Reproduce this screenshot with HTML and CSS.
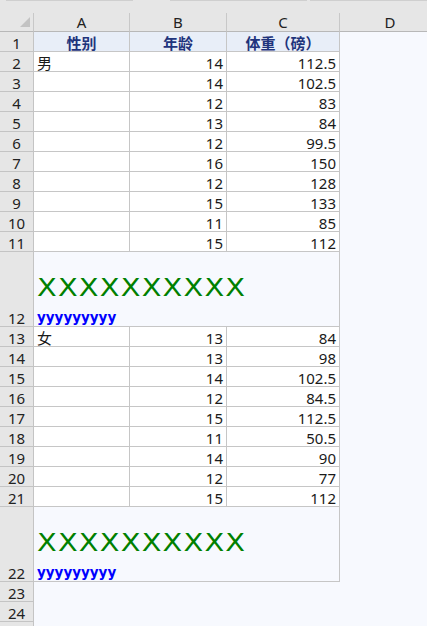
FILE: index.html
```html
<!DOCTYPE html>
<html lang="zh-CN">

<head>
    <meta charset="UTF-8">
    <meta name="viewport" content="width=device-width, initial-scale=1.0">
    <title>Sheet1</title>
    <link rel="stylesheet" href="styles.css">
</head>

<body>
    <div class="topbar">
        <span class="bar bar-one"></span>
        <span class="bar bar-two"></span>
        <span class="bar bar-three"></span>
    </div>

    <div class="sheet">
        <!-- column headers -->
        <div class="corner">
            <svg width="10" height="10" viewBox="0 0 10 10"><polygon points="10,0 10,10 0,10" fill="#c3c3c3" /></svg>
        </div>
        <div class="colhead">A</div>
        <div class="colhead">B</div>
        <div class="colhead">C</div>
        <div class="colhead colhead-last">D</div>

        <!-- row 1 -->
        <div class="rowhead">1</div>
        <div class="cell head">性别</div>
        <div class="cell head">年龄</div>
        <div class="cell head">体重（磅）</div>
        <div class="blank"></div>

        <div class="rowhead">2</div>
        <div class="cell txt">男</div>
        <div class="cell num">14</div>
        <div class="cell num">112.5</div>
        <div class="blank"></div>

        <div class="rowhead">3</div>
        <div class="cell txt"></div>
        <div class="cell num">14</div>
        <div class="cell num">102.5</div>
        <div class="blank"></div>

        <div class="rowhead">4</div>
        <div class="cell txt"></div>
        <div class="cell num">12</div>
        <div class="cell num">83</div>
        <div class="blank"></div>

        <div class="rowhead">5</div>
        <div class="cell txt"></div>
        <div class="cell num">13</div>
        <div class="cell num">84</div>
        <div class="blank"></div>

        <div class="rowhead">6</div>
        <div class="cell txt"></div>
        <div class="cell num">12</div>
        <div class="cell num">99.5</div>
        <div class="blank"></div>

        <div class="rowhead">7</div>
        <div class="cell txt"></div>
        <div class="cell num">16</div>
        <div class="cell num">150</div>
        <div class="blank"></div>

        <div class="rowhead">8</div>
        <div class="cell txt"></div>
        <div class="cell num">12</div>
        <div class="cell num">128</div>
        <div class="blank"></div>

        <div class="rowhead">9</div>
        <div class="cell txt"></div>
        <div class="cell num">15</div>
        <div class="cell num">133</div>
        <div class="blank"></div>

        <div class="rowhead">10</div>
        <div class="cell txt"></div>
        <div class="cell num">11</div>
        <div class="cell num">85</div>
        <div class="blank"></div>

        <div class="rowhead">11</div>
        <div class="cell txt"></div>
        <div class="cell num">15</div>
        <div class="cell num">112</div>
        <div class="blank"></div>

        <!-- row 12, merged A:C -->
        <div class="rowhead">12</div>
        <div class="cell merged">
            <div class="big"><span>XXXXXXXXXX</span></div>
            <div class="small">yyyyyyyyy</div>
        </div>
        <div class="blank"></div>

        <div class="rowhead">13</div>
        <div class="cell txt">女</div>
        <div class="cell num">13</div>
        <div class="cell num">84</div>
        <div class="blank"></div>

        <div class="rowhead">14</div>
        <div class="cell txt"></div>
        <div class="cell num">13</div>
        <div class="cell num">98</div>
        <div class="blank"></div>

        <div class="rowhead">15</div>
        <div class="cell txt"></div>
        <div class="cell num">14</div>
        <div class="cell num">102.5</div>
        <div class="blank"></div>

        <div class="rowhead">16</div>
        <div class="cell txt"></div>
        <div class="cell num">12</div>
        <div class="cell num">84.5</div>
        <div class="blank"></div>

        <div class="rowhead">17</div>
        <div class="cell txt"></div>
        <div class="cell num">15</div>
        <div class="cell num">112.5</div>
        <div class="blank"></div>

        <div class="rowhead">18</div>
        <div class="cell txt"></div>
        <div class="cell num">11</div>
        <div class="cell num">50.5</div>
        <div class="blank"></div>

        <div class="rowhead">19</div>
        <div class="cell txt"></div>
        <div class="cell num">14</div>
        <div class="cell num">90</div>
        <div class="blank"></div>

        <div class="rowhead">20</div>
        <div class="cell txt"></div>
        <div class="cell num">12</div>
        <div class="cell num">77</div>
        <div class="blank"></div>

        <div class="rowhead">21</div>
        <div class="cell txt"></div>
        <div class="cell num">15</div>
        <div class="cell num">112</div>
        <div class="blank"></div>

        <!-- row 22, merged A:C -->
        <div class="rowhead">22</div>
        <div class="cell merged">
            <div class="big"><span>XXXXXXXXXX</span></div>
            <div class="small">yyyyyyyyy</div>
        </div>
        <div class="blank"></div>

        <div class="rowhead">23</div>
        <div class="blank wide"></div>

        <div class="rowhead">24</div>
        <div class="blank wide"></div>

        <div class="rowhead"></div>
        <div class="blank wide"></div>
    </div>
</body>

</html>
```

FILE: styles.css
```css
* {
    box-sizing: border-box;
}

body {
    margin: 0;
    background-color: #f7f9fe;
    font-family: "Noto Sans", "Noto Sans CJK SC", sans-serif;
    font-size: 15px;
    color: #1a1a1a;
    overflow: hidden;
}

.topbar {
    height: 13px;
    background-color: #e6e6e6;
    position: relative;
}

.bar {
    display: block;
    height: 1px;
    background-color: #cfcfcf;
    position: absolute;
    top: 0;
}

.bar-one {
    left: 6px;
    width: 127px;
}

.bar-two {
    left: 170px;
    width: 137px;
}

.bar-three {
    left: 310px;
    right: 0;
}

.sheet {
    display: grid;
    grid-template-columns: 34px 96px 97px 113px 100px;
    grid-template-rows: 19px repeat(11, 20px) 75px repeat(9, 20px) 75px repeat(3, 20px);
}

/* headers */
.corner {
    background-color: #e6e6e6;
    border-right: 1px solid #c8c8c8;
    border-bottom: 1px solid #b8b8b8;
    display: flex;
    justify-content: flex-end;
    align-items: flex-end;
    padding-right: 3px;
    padding-bottom: 4px;
}

.corner svg {
    display: block;
}

.colhead {
    background-color: #e6e6e6;
    border-right: 1px solid #c8c8c8;
    border-bottom: 1px solid #b8b8b8;
    display: flex;
    justify-content: center;
    align-items: flex-end;
    line-height: 15px;
    padding-bottom: 1px;
    color: #222;
}

.colhead-last {
    border-right: none;
}

.rowhead {
    background-color: #e6e6e6;
    border-right: 1px solid #c4c4c4;
    border-bottom: 1px solid #c4c4c4;
    display: flex;
    justify-content: center;
    align-items: flex-end;
    line-height: 15px;
    color: #222;
}

/* cells */
.cell {
    background-color: #fff;
    border-right: 1px solid #c6c6c6;
    border-bottom: 1px solid #c6c6c6;
    display: flex;
    align-items: flex-end;
    line-height: 15px;
    white-space: nowrap;
}

.txt {
    padding-left: 3px;
}

.num {
    justify-content: flex-end;
    padding-right: 3px;
}

.head {
    background-color: #e8eef8;
    justify-content: center;
    font-weight: bold;
    color: #1f347c;
}

.blank {
    background-color: #f7f9fe;
}

.wide {
    grid-column: span 4;
}

/* merged rows */
.merged {
    grid-column: span 3;
    background-color: #f7f9fe;
    flex-direction: column;
    justify-content: flex-end;
    align-items: flex-start;
    padding-left: 3px;
    overflow: hidden;
}

.big {
    font-family: "DejaVu Sans", sans-serif;
    font-size: 24px;
    line-height: 24px;
    color: #008000;
    margin-bottom: 11px;
}

.big span {
    display: inline-block;
    letter-spacing: 1px;
    transform: scaleX(1.2);
    transform-origin: left bottom;
}

.small {
    font-family: "DejaVu Sans", sans-serif;
    font-size: 13.5px;
    font-weight: bold;
    line-height: 13px;
    color: #0000ff;
    padding-bottom: 2px;
}
```
